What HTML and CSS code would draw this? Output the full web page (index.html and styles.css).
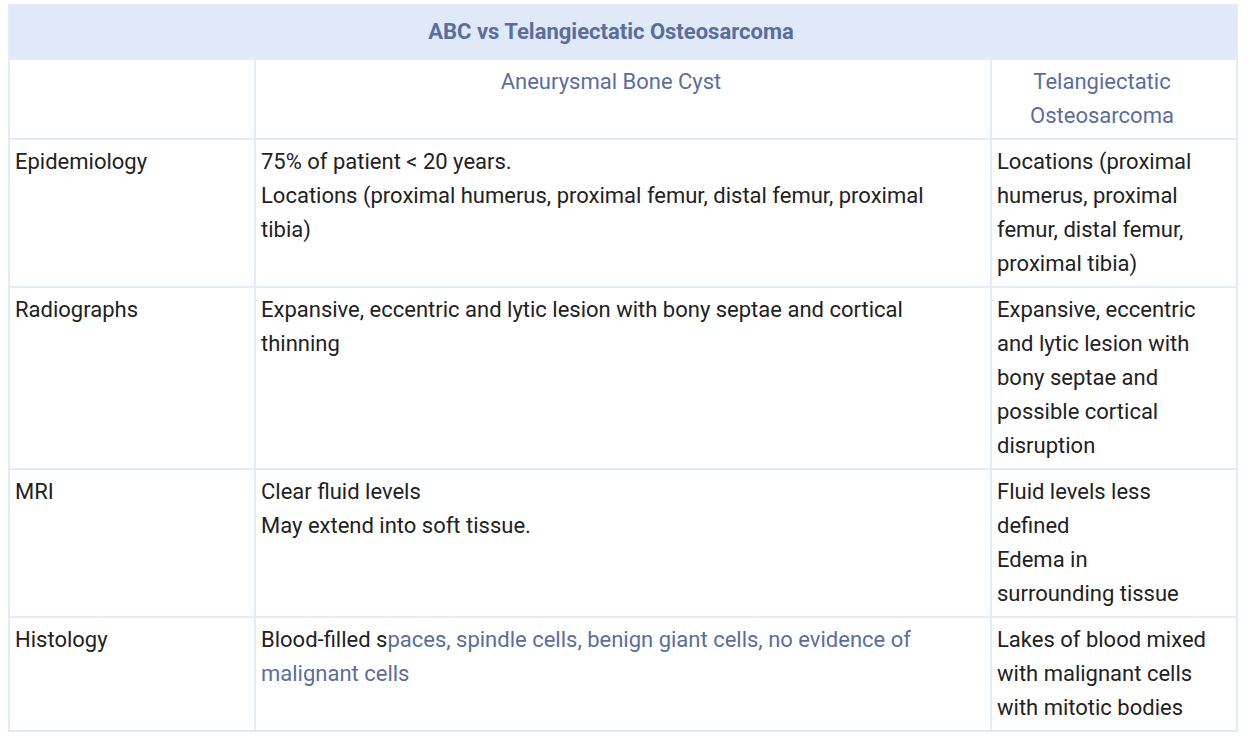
FILE: index.html
```html
<!DOCTYPE html>
<html>
<head>
<meta charset="utf-8">
<link rel="stylesheet" href="styles.css">
</head>
<body>
<table class="cmp">
  <colgroup>
    <col class="c1">
    <col class="c2">
    <col class="c3">
  </colgroup>
  <thead>
    <tr><th class="title" colspan="3">ABC vs Telangiectatic Osteosarcoma</th></tr>
  </thead>
  <tbody>
    <tr class="sub">
      <td></td>
      <td class="head">Aneurysmal Bone Cyst</td>
      <td class="head">Telangiectatic Osteosarcoma</td>
    </tr>
    <tr>
      <td>Epidemiology</td>
      <td>75% of patient &lt; 20 years.<br>Locations (proximal humerus, proximal femur, distal femur, proximal tibia)</td>
      <td>Locations (proximal humerus, proximal femur, distal femur, proximal tibia)</td>
    </tr>
    <tr>
      <td>Radiographs</td>
      <td>Expansive, eccentric and lytic lesion with bony septae and cortical thinning</td>
      <td>Expansive, eccentric and lytic lesion with bony septae and possible cortical disruption</td>
    </tr>
    <tr>
      <td>MRI</td>
      <td>Clear fluid levels<br>May extend into soft tissue.</td>
      <td>Fluid levels less defined<br>Edema in surrounding tissue</td>
    </tr>
    <tr>
      <td>Histology</td>
      <td>Blood-filled s<span class="link">paces, spindle cells, benign giant cells, no evidence of malignant cells</span></td>
      <td>Lakes of blood mixed with malignant cells with mitotic bodies</td>
    </tr>
  </tbody>
</table>
</body>
</html>
```
FILE: styles.css
```css
html, body {
  margin: 0;
  background: #ffffff;
}
body {
  padding: 4px 8px 0 8px;
  font-family: Roboto, "Liberation Sans", sans-serif;
  font-size: 22px;
  line-height: 34px;
  color: #222222;
}
.cmp {
  width: 1228px;
  border-collapse: collapse;
  table-layout: fixed;
}
.c1 { width: 246px; }
.c2 { width: 736px; }
.c3 { width: 246px; }
.cmp th,
.cmp td {
  border: 2px solid #e4ebf6;
  padding: 5px 29px 5px 5px;
  vertical-align: top;
  text-align: left;
}
.cmp th.title {
  background: #dfe9f8;
  color: #5a6e9e;
  font-weight: 700;
  text-align: center;
  padding: 9px 29px 9px 5px;
  font-size: 22px;
}
.cmp td.head {
  text-align: center;
  color: #5a6e9e;
}
.link {
  color: #5a6e9e;
}
```
